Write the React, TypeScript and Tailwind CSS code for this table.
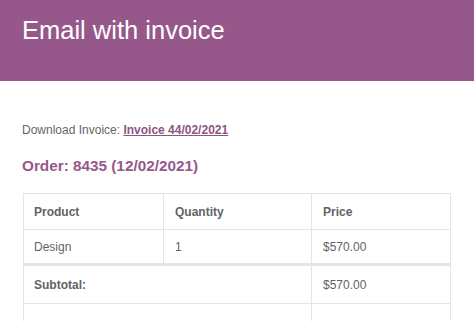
import React from "react";

const font = { fontFamily: '"Liberation Sans", Arial, sans-serif' };

export default function App() {
  return (
    <div className="w-[474px] h-[321px] overflow-hidden bg-white" style={font}>
      <div className="h-[81px] bg-[#96588a] pt-[18px] pl-[22px]">
        <h1 className="text-[25.5px] leading-[25px] text-white font-normal">Email with invoice</h1>
      </div>
      <div className="pl-[22px]">
        <p className="mt-[41px] text-[12px] leading-[16px] text-[#666666]">
          Download Invoice:{" "}
          <a href="#" className="font-bold text-[#8c5581] underline">Invoice 44/02/2021</a>
        </p>
        <h2 className="mt-[20px] text-[15.3px] leading-[15px] font-bold text-[#96588a]">Order: 8435 (12/02/2021)</h2>
      </div>
      <div className="mt-[20px] ml-[23px] w-[428px] border border-[#e5e5e5] text-[12px] text-[#636363]">
        <div className="flex h-[36px] border-b border-[#e5e5e5] font-bold">
          <div className="w-[140px] border-r border-[#e5e5e5] flex items-center pl-[10px]">Product</div>
          <div className="w-[148px] border-r border-[#e5e5e5] flex items-center pl-[11px]">Quantity</div>
          <div className="flex-1 flex items-center pl-[11px]">Price</div>
        </div>
        <div className="flex h-[36px] border-b-[3px] border-[#e5e5e5]">
          <div className="w-[140px] border-r border-[#e5e5e5] flex items-center pl-[10px] pt-[1px]">Design</div>
          <div className="w-[148px] border-r border-[#e5e5e5] flex items-center pl-[11px] pt-[1px]">1</div>
          <div className="flex-1 flex items-center pl-[11px] pt-[1px]">$570.00</div>
        </div>
        <div className="flex h-[38px] border-b border-[#e5e5e5]">
          <div className="w-[288px] border-r border-[#e5e5e5] flex items-center pl-[10px] font-bold">Subtotal:</div>
          <div className="flex-1 flex items-center pl-[11px]">$570.00</div>
        </div>
        <div className="flex h-[36px]">
          <div className="w-[288px] border-r border-[#e5e5e5]"></div>
          <div className="flex-1"></div>
        </div>
      </div>
    </div>
  );
}
